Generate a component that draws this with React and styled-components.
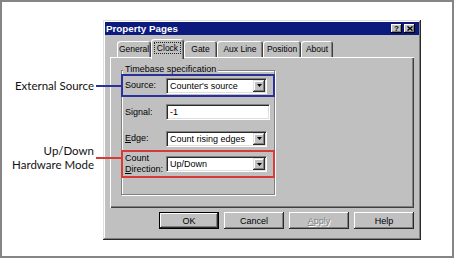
import React from 'react';
import styled, { createGlobalStyle } from 'styled-components';

const Global = createGlobalStyle`
  html, body { margin: 0; padding: 0; background: #fff; }
  body { font-family: "Liberation Sans", Arial, sans-serif; }
`;

const Frame = styled.div`
  box-sizing: border-box;
  width: 454px;
  height: 258px;
  border: 2px solid #858585;
  background: #fff;
  padding: 18px 0 0 101px;
`;

const Dialog = styled.div`
  box-sizing: border-box;
  width: 318px;
  height: 220px;
  background: #c0c0c0;
  padding: 2px;
  display: flex;
  flex-direction: column;
  box-shadow: inset -1px -1px 0 #2a2a2a, inset 1px 1px 0 #dfdfdf,
    inset -2px -2px 0 #808080, inset 2px 2px 0 #fff;
  font-family: "Liberation Sans", Arial, sans-serif;
  font-size: 9px;
  color: #000;
`;

const TitleBar = styled.div`
  height: 13px;
  flex: none;
  background: #0b1a7c;
  display: flex;
  align-items: center;
  justify-content: space-between;
  padding: 0 4px 0 1px;
`;

const TitleText = styled.span`
  color: #fff;
  font-weight: bold;
  font-size: 9.8px;
`;

const CaptionButtons = styled.div`
  display: flex;
  gap: 2px;
`;

const CaptionButton = styled.div`
  box-sizing: border-box;
  width: 11px;
  height: 9px;
  background: #c0c0c0;
  box-shadow: inset -1px -1px 0 #000, inset 1px 1px 0 #fff, inset -2px -2px 0 #808080;
  display: flex;
  align-items: center;
  justify-content: center;
  font-weight: bold;
  font-size: 8px;
  line-height: 1;
`;

const Body = styled.div`
  flex: 1;
  display: flex;
  flex-direction: column;
  padding: 4px 5px 0 5px;
`;

const TabStrip = styled.div`
  height: 18px;
  flex: none;
  display: flex;
  align-items: flex-end;
  padding-left: 7px;
`;

const Tab = styled.div`
  position: relative;
  z-index: ${(p) => (p.$active ? 2 : 1)};
  box-sizing: border-box;
  width: ${(p) => p.$w}px;
  height: ${(p) => (p.$active ? 20 : 16)}px;
  margin-bottom: ${(p) => (p.$active ? -2 : 0)}px;
  padding-bottom: ${(p) => (p.$active ? 2 : 0)}px;
  background: #c0c0c0;
  border-radius: 3px 3px 0 0;
  box-shadow: inset 1px 1px 0 #fff, inset -1px 0 0 #404040, inset -2px 0 0 #808080;
  display: flex;
  align-items: center;
  justify-content: center;
  white-space: nowrap;
  font-size: 8.5px;
`;

const Focus = styled.span`
  border: 1px dotted #222;
  padding: 0 2px;
  line-height: 10px;
`;

const Panel = styled.div`
  box-sizing: border-box;
  height: 151px;
  flex: none;
  box-shadow: inset 1px 1px 0 #fff, inset -1px -1px 0 #404040, inset -2px -2px 0 #808080;
  padding: 13px 0 0 11px;
`;

const GroupBox = styled.div`
  position: relative;
  box-sizing: border-box;
  width: 154px;
  height: 125px;
  border: 1px solid #808080;
  box-shadow: 1px 1px 0 #fff, inset 1px 1px 0 #fff;
  padding-top: 3px;
  display: flex;
  flex-direction: column;
`;

const Legend = styled.span`
  position: absolute;
  top: -7px;
  left: 1px;
  padding: 0 2px;
  background: #c0c0c0;
  line-height: 11px;
  white-space: nowrap;
`;

const Highlight = styled.div`
  position: relative;
  box-sizing: border-box;
  height: ${(p) => p.$h}px;
  margin: 0 -1px;
  border: 2px solid ${(p) => p.$color};
  padding-left: 2px;
  display: flex;
  align-items: center;
`;

const Row = styled.div`
  height: ${(p) => p.$h}px;
  display: flex;
  align-items: center;
  padding-left: 3px;
`;

const Label = styled.div`
  width: 41px;
  flex: none;
  line-height: 11px;
  white-space: nowrap;
`;

const Field = styled.div`
  box-sizing: border-box;
  width: ${(p) => p.$w}px;
  height: 16px;
  background: #fff;
  border-top: 1px solid #808080;
  border-left: 1px solid #808080;
  border-bottom: 1px solid #fff;
  border-right: 1px solid #fff;
  box-shadow: inset 1px 1px 0 #2a2a2a, inset -1px -1px 0 #dfdfdf;
  display: flex;
  align-items: center;
  padding: 1px 1px 1px 3px;
  white-space: nowrap;
`;

const FieldText = styled.span`
  flex: 1;
  overflow: hidden;
`;

const ArrowButton = styled.div`
  box-sizing: border-box;
  width: 12px;
  height: 12px;
  flex: none;
  background: #c0c0c0;
  box-shadow: inset -1px -1px 0 #2a2a2a, inset 1px 1px 0 #dfdfdf,
    inset -2px -2px 0 #808080, inset 2px 2px 0 #fff;
  display: flex;
  align-items: center;
  justify-content: center;
`;

const Callout = styled.div`
  position: absolute;
  right: calc(100% + 2px);
  top: ${(p) => p.$y}px;
  transform: translateY(-50%);
  display: flex;
  align-items: center;
  gap: 2px;
`;

const CalloutText = styled.div`
  font-family: Lato, "Liberation Sans", sans-serif;
  font-size: 11.5px;
  line-height: 14px;
  color: #111;
  text-align: right;
  white-space: nowrap;
`;

const CalloutLine = styled.div`
  width: 25px;
  height: 2px;
  background: ${(p) => p.$color};
`;

const ButtonRow = styled.div`
  display: flex;
  justify-content: flex-end;
  gap: 5px;
  margin-top: 4px;
`;

const Button = styled.div`
  box-sizing: border-box;
  width: 60px;
  height: 17px;
  background: #c0c0c0;
  display: flex;
  align-items: center;
  justify-content: center;
  color: ${(p) => (p.$disabled ? '#808080' : '#000')};
  text-shadow: ${(p) => (p.$disabled ? '1px 1px 0 #fff' : 'none')};
  border: ${(p) => (p.$default ? '1px solid #000' : 'none')};
  box-shadow: inset -1px -1px 0 #2a2a2a, inset 1px 1px 0 #fff, inset -2px -2px 0 #808080;
`;

const U = styled.span`
  text-decoration: underline;
`;

const BLUE = '#2a309c';
const RED = '#d83a3a';

function Arrow() {
  return (
    <ArrowButton>
      <svg width="5" height="3" viewBox="0 0 5 3">
        <path d="M0 0H5L2.5 3Z" fill="#000" />
      </svg>
    </ArrowButton>
  );
}

function Combo({ children }) {
  return (
    <Field $w={101}>
      <FieldText>{children}</FieldText>
      <Arrow />
    </Field>
  );
}

const tabs = [
  { label: 'General', w: 34 },
  { label: 'Clock', w: 33, active: true },
  { label: 'Gate', w: 33 },
  { label: 'Aux Line', w: 46 },
  { label: 'Position', w: 38 },
  { label: 'About', w: 32 },
];

export default function App() {
  return (
    <>
      <Global />
      <Frame>
        <Dialog>
          <TitleBar>
            <TitleText>Property Pages</TitleText>
            <CaptionButtons>
              <CaptionButton>?</CaptionButton>
              <CaptionButton>
                <svg width="6" height="5" viewBox="0 0 6 5">
                  <path d="M0.5 0.5L5.5 4.5M5.5 0.5L0.5 4.5" stroke="#000" strokeWidth="1.4" />
                </svg>
              </CaptionButton>
            </CaptionButtons>
          </TitleBar>
          <Body>
            <TabStrip>
              {tabs.map((t) => (
                <Tab key={t.label} $w={t.w} $active={t.active}>
                  {t.active ? <Focus>{t.label}</Focus> : t.label}
                </Tab>
              ))}
            </TabStrip>
            <Panel>
              <GroupBox>
                <Legend>Timebase specification</Legend>
                <Highlight $h={23} $color={BLUE}>
                  <Callout $y={9.5}>
                    <CalloutText>External Source</CalloutText>
                    <CalloutLine $color={BLUE} />
                  </Callout>
                  <Label>Source:</Label>
                  <Combo>Counter's source</Combo>
                </Highlight>
                <Row $h={30}>
                  <Label>Signal:</Label>
                  <Field $w={104}>
                    <FieldText>-1</FieldText>
                  </Field>
                </Row>
                <Row $h={23}>
                  <Label>
                    <U>E</U>dge:
                  </Label>
                  <Combo>Count rising edges</Combo>
                </Row>
                <Highlight $h={28} $color={RED}>
                  <Callout $y={6}>
                    <CalloutText>
                      Up/Down
                      <br />
                      Hardware Mode
                    </CalloutText>
                    <CalloutLine $color={RED} />
                  </Callout>
                  <Label>
                    Count
                    <br />
                    <U>D</U>irection:
                  </Label>
                  <Combo>Up/Down</Combo>
                </Highlight>
              </GroupBox>
            </Panel>
            <ButtonRow>
              <Button $default>OK</Button>
              <Button>Cancel</Button>
              <Button $disabled>
                <span>
                  <U>A</U>pply
                </span>
              </Button>
              <Button>Help</Button>
            </ButtonRow>
          </Body>
        </Dialog>
      </Frame>
    </>
  );
}
